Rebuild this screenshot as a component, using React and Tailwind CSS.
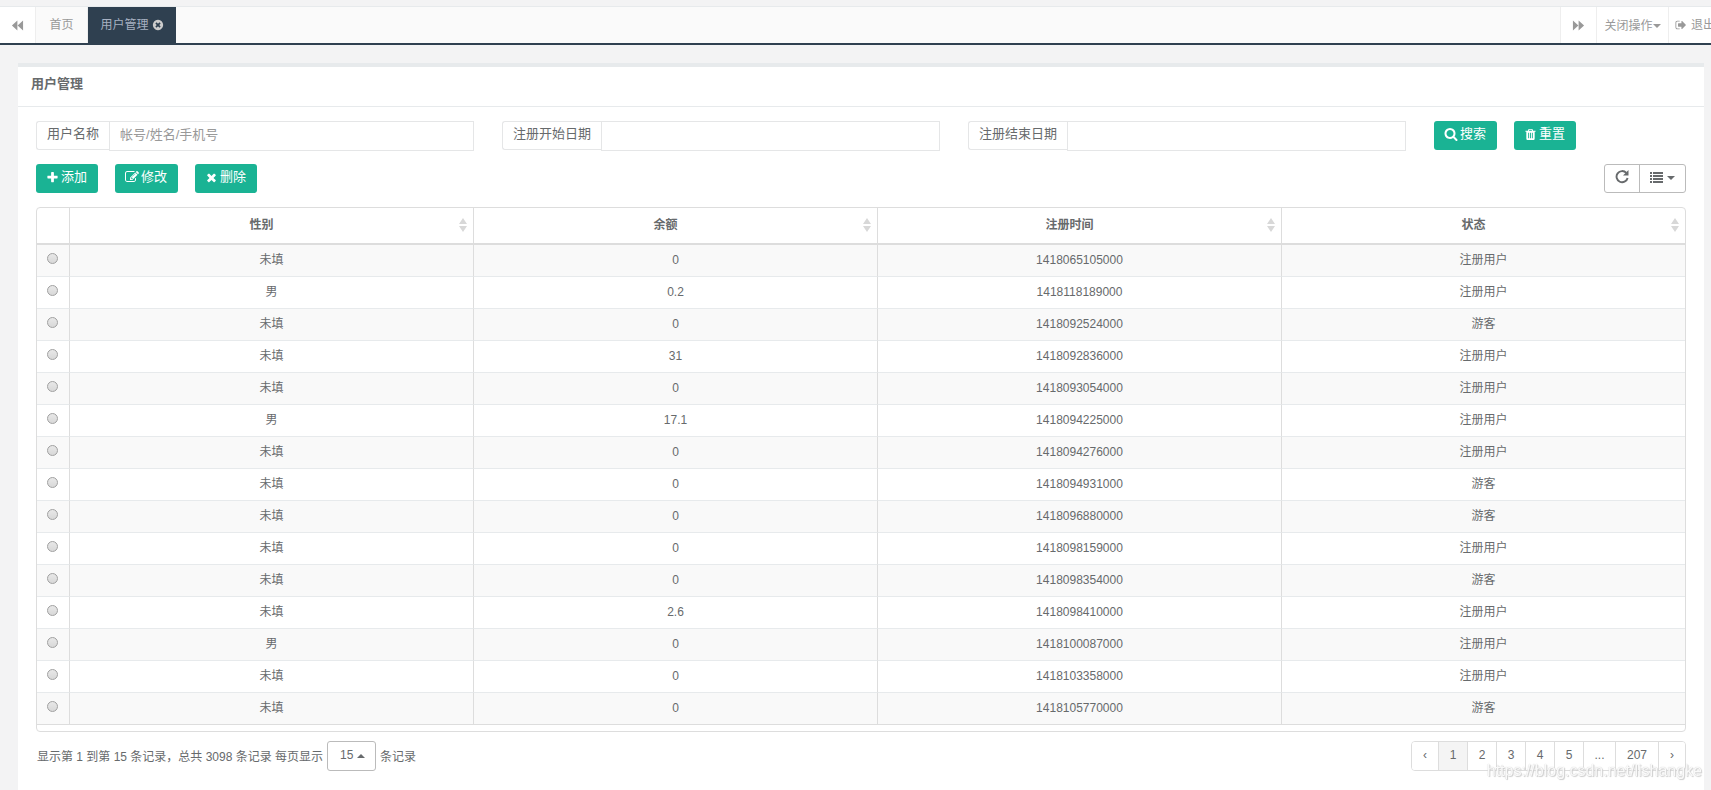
import React from 'react';

const ICONS = {
  backward: 'M880 192v1408L128 896zM1664 192v1408L912 896z',
  forward: 'M128 192v1408l752-704zM912 192v1408l752-704z',
  plus: 'M1600 736v192q0 40-28 68t-68 28h-416v416q0 40-28 68t-68 28h-192q-40 0-68-28t-28-68v-416h-416q-40 0-68-28t-28-68v-192q0-40 28-68t68-28h416v-416q0-40 28-68t68-28h192q40 0 68 28t28 68v416h416q40 0 68 28t28 68z',
  edit: 'M888 1184l116-116-152-152-116 116v56h96v96h56zm440-720q-16-16-33 1l-350 350q-17 17-1 33t33-1l350-350q17-17 1-33zm80 594v190q0 119-84.5 203.5t-203.5 84.5h-832q-119 0-203.5-84.5t-84.5-203.5v-832q0-119 84.5-203.5t203.5-84.5h832q63 0 117 25 15 7 18 23 3 17-9 29l-49 49q-14 14-32 8-23-6-45-6h-832q-66 0-113 47t-47 113v832q0 66 47 113t113 47h832q66 0 113-47t47-113v-126q0-13 9-22l64-64q15-15 35-7t20 29zm-96-738l288 288-672 672h-288v-288zm444 132l-92 92-288-288 92-92q28-28 68-28t68 28l152 152q28 28 28 68t-28 68z',
  remove: 'M1490 1322q0 40-28 68l-136 136q-28 28-68 28t-68-28l-294-294-294 294q-28 28-68 28t-68-28l-136-136q-28-28-28-68t28-68l294-294-294-294q-28-28-28-68t28-68l136-136q28-28 68-28t68 28l294 294 294-294q28-28 68-28t68 28l136 136q28 28 28 68t-28 68l-294 294 294 294q28 28 28 68z',
  search: 'M1216 832q0-185-131.5-316.5t-316.5-131.5-316.5 131.5-131.5 316.5 131.5 316.5 316.5 131.5 316.5-131.5 131.5-316.5zm512 832q0 52-38 90t-90 38q-54 0-90-38l-343-342q-179 124-399 124-143 0-273.5-55.5t-225-150-150-225-55.5-273.5 55.5-273.5 150-225 225-150 273.5-55.5 273.5 55.5 225 150 150 225 55.5 273.5q0 220-124 399l343 343q37 37 37 90z',
  trash: 'M704 1376v-704q0-14-9-23t-23-9h-64q-14 0-23 9t-9 23v704q0 14 9 23t23 9h64q14 0 23-9t9-23zm256 0v-704q0-14-9-23t-23-9h-64q-14 0-23 9t-9 23v704q0 14 9 23t23 9h64q14 0 23-9t9-23zm256 0v-704q0-14-9-23t-23-9h-64q-14 0-23 9t-9 23v704q0 14 9 23t23 9h64q14 0 23-9t9-23zm-544-992h448l-48-117q-7-9-17-11h-317q-10 2-17 11zm928 32v64q0 14-9 23t-23 9h-96v948q0 83-47 143.5t-113 60.5h-832q-66 0-113-58.5t-47-141.5v-952h-96q-14 0-23-9t-9-23v-64q0-14 9-23t23-9h309l70-167q15-37 54-63t79-26h320q40 0 79 26t54 63l70 167h309q14 0 23 9t9 23z',
  close: 'M1277 1122q0-26-19-45l-181-181 181-181q19-19 19-45 0-27-19-46l-90-90q-19-19-46-19-26 0-45 19l-181 181-181-181q-19-19-45-19-27 0-46 19l-90 90q-19 19-19 46 0 26 19 45l181 181-181 181q-19 19-19 45 0 27 19 46l90 90q19 19 46 19 26 0 45-19l181-181 181 181q19 19 45 19 27 0 46-19l90-90q19-19 19-46zm387-226q0 209-103 385.5t-279.5 279.5-385.5 103-385.5-103-279.5-279.5-103-385.5 103-385.5 279.5-279.5 385.5-103 385.5 103 279.5 279.5 103 385.5z',
  signOut: 'M704 1440q0 4 1 20t.5 26.5-3 23.5-10 19.5-20.5 6.5h-320q-119 0-203.5-84.5t-84.5-203.5v-704q0-119 84.5-203.5t203.5-84.5h320q13 0 22.5 9.5t9.5 22.5q0 4 1 20t.5 26.5-3 23.5-10 19.5-20.5 6.5h-320q-66 0-113 47t-47 113v704q0 66 47 113t113 47h312l11.5 1 11.5 3 8 5.5 7 9 2 13.5zm928-544q0 26-19 45l-544 544q-19 19-45 19t-45-19-19-45v-288h-448q-26 0-45-19t-19-45v-384q0-26 19-45t45-19h448v-288q0-26 19-45t45-19 45 19l544 544q19 19 19 45z',
};

const COLUMNS = ['性别', '余额', '注册时间', '状态'];

const USERS = [
  ['未填', '0', '1418065105000', '注册用户'],
  ['男', '0.2', '1418118189000', '注册用户'],
  ['未填', '0', '1418092524000', '游客'],
  ['未填', '31', '1418092836000', '注册用户'],
  ['未填', '0', '1418093054000', '注册用户'],
  ['男', '17.1', '1418094225000', '注册用户'],
  ['未填', '0', '1418094276000', '注册用户'],
  ['未填', '0', '1418094931000', '游客'],
  ['未填', '0', '1418096880000', '游客'],
  ['未填', '0', '1418098159000', '注册用户'],
  ['未填', '0', '1418098354000', '游客'],
  ['未填', '2.6', '1418098410000', '注册用户'],
  ['男', '0', '1418100087000', '注册用户'],
  ['未填', '0', '1418103358000', '注册用户'],
  ['未填', '0', '1418105770000', '游客'],
];

const PAGES = [
  { label: '‹', width: 'w-[27px]' },
  { label: '1', width: 'w-[29px]', active: true },
  { label: '2', width: 'w-[29px]' },
  { label: '3', width: 'w-[29px]' },
  { label: '4', width: 'w-[29px]' },
  { label: '5', width: 'w-[29px]' },
  { label: '...', width: 'w-8' },
  { label: '207', width: 'w-[43px]' },
  { label: '›', width: 'w-[26px]' },
];

function Icon({ name, className = 'size-[13px]' }) {
  return (
    <svg viewBox="0 0 1792 1792" fill="currentColor" className={`shrink-0 ${className}`} aria-hidden="true">
      <path d={ICONS[name]} />
    </svg>
  );
}

function Caret({ up }) {
  return (
    <svg viewBox="0 0 8 4" fill="currentColor" className="h-1 w-2 shrink-0" aria-hidden="true">
      <path d={up ? 'M0 4h8L4 0z' : 'M0 0h8L4 4z'} />
    </svg>
  );
}

function ActionButton({ icon, iconClass, children }) {
  return (
    <button
      type="button"
      className="flex h-[29px] items-center gap-0.5 rounded-[3px] bg-[#1ab394] pr-[11px] pb-[3px] pl-2.5 text-[13px] text-white"
    >
      <Icon name={icon} className={iconClass} />
      {children}
    </button>
  );
}

function Field({ id, label, placeholder }) {
  return (
    <div className="flex min-w-0 flex-1 items-start">
      <label
        htmlFor={id}
        className="flex h-[29px] shrink-0 items-center rounded-l-[3px] border border-r-0 border-[#e5e6e7] px-2.5 pb-1 text-[13px]"
      >
        {label}
      </label>
      <input
        id={id}
        type="text"
        placeholder={placeholder}
        className="h-[30px] min-w-0 flex-1 border border-[#e5e6e7] bg-white px-2.5 pb-[3px] text-[13px] outline-none placeholder:text-[#999]"
      />
    </div>
  );
}

function TabBar() {
  return (
    <header className="mt-1.5 flex h-[39px] shrink-0 overflow-hidden border-t border-b-2 border-t-[#e7eaec] border-b-[#2f4050] bg-[#fafafa] text-[12px] text-[#999]">
      <button type="button" aria-label="向左" className="flex w-9 shrink-0 items-center justify-center border-r border-[#eee] bg-white">
        <Icon name="backward" />
      </button>
      <nav className="flex min-w-0 flex-1">
        <a href="#home" className="flex w-[52px] items-center justify-center border-r border-[#eee]">首页</a>
        <a href="#users" className="flex w-[88px] items-center justify-center gap-[3px] bg-[#2f4050] text-[#a7b1c2]">
          用户管理
          <Icon name="close" className="size-3 text-[#ccc]" />
        </a>
      </nav>
      <button type="button" aria-label="向右" className="flex w-9 shrink-0 items-center justify-center border-l border-[#eee] bg-white">
        <Icon name="forward" />
      </button>
      <button type="button" className="flex w-[72px] shrink-0 items-center justify-center border-l border-[#eee] bg-white pt-0.5">
        关闭操作
        <Caret />
      </button>
      <a href="#logout" className="flex w-[43px] shrink-0 items-center gap-1 border-l border-[#eee] bg-white pl-1.5 whitespace-nowrap">
        <Icon name="signOut" className="size-3" />
        退出
      </a>
    </header>
  );
}

function UserTable() {
  return (
    <div className="mt-[14px] overflow-hidden rounded-[4px] border border-[#ddd] pb-1.5">
      <table className="w-full table-fixed border-separate border-spacing-0 text-center text-[12px]">
        <thead>
          <tr className="h-[37px]">
            <th className="w-8 border-b-2 border-[#ddd]" aria-label="选择" />
            {COLUMNS.map((column) => (
              <th key={column} className="border-b-2 border-l border-[#ddd] pb-0.5 font-bold">
                <div className="flex items-center pr-1.5">
                  <span className="flex-1 pr-1.5">{column}</span>
                  <svg viewBox="0 0 8 14" fill="#d8d8d8" className="h-[14px] w-2" aria-hidden="true">
                    <path d="M4 0l4 6H0zM0 8h8l-4 6z" />
                  </svg>
                </div>
              </th>
            ))}
          </tr>
        </thead>
        <tbody>
          {USERS.map((user) => (
            <tr key={user[2]} className="group h-8 odd:bg-[#f9f9f9]">
              <td className="border-b border-[#e7eaec] pr-0.5 pb-1 group-last:border-[#ddd]">
                <input
                  type="radio"
                  name="user"
                  aria-label={user[2]}
                  className="mx-auto block size-[11px] appearance-none rounded-full border border-[#a0a0a0] bg-linear-to-b from-[#e8e8e8] to-[#d8d8d8]"
                />
              </td>
              {user.map((value, i) => (
                <td
                  key={COLUMNS[i]}
                  className="border-b border-l border-b-[#e7eaec] border-l-[#ddd] pb-0.5 group-last:border-b-[#ddd]"
                >
                  {value}
                </td>
              ))}
            </tr>
          ))}
        </tbody>
      </table>
    </div>
  );
}

function Pagination() {
  return (
    <div className="mt-[9px] flex items-center justify-between text-[12px]">
      <div className="flex items-center gap-1 pl-px whitespace-nowrap">
        <label htmlFor="page-size" className="pt-0.5">显示第 1 到第 15 条记录，总共 3098 条记录 每页显示</label>
        <span className="relative flex items-center">
          <select
            id="page-size"
            defaultValue="15"
            className="h-[30px] w-[49px] appearance-none rounded-[3px] border border-[#bbb] bg-white pl-3 pb-0.5"
          >
            <option>15</option>
          </select>
          <span className="pointer-events-none absolute right-[11px]">
            <Caret up />
          </span>
        </span>
        <span className="pt-0.5">条记录</span>
      </div>
      <nav className="flex h-[30px] divide-x divide-[#ddd] overflow-hidden rounded-[4px] border border-[#ddd]">
        {PAGES.map(({ label, width, active }) => (
          <a
            key={label}
            href="#page"
            className={`flex items-center justify-center pb-0.5 ${width} ${active ? 'bg-[#f4f4f4]' : 'bg-white'}`}
          >
            {label}
          </a>
        ))}
      </nav>
    </div>
  );
}

export default function App() {
  return (
    <div className="flex min-h-screen flex-col bg-[#f3f3f4] font-['Liberation_Sans','Noto_Sans_CJK_SC',sans-serif] text-[#676a6c]">
      <TabBar />
      <main className="mt-[18px] mr-[7px] ml-[18px] flex-1 border-t-4 border-[#e7eaec] bg-white">
        <h1 className="flex h-10 items-center border-b border-[#e7eaec] px-[13px] pb-1.5 text-[13px] font-semibold">用户管理</h1>
        <div className="px-[18px] pt-[14px] pb-4">
          <form className="flex gap-7">
            <Field id="keyword" label="用户名称" placeholder="帐号/姓名/手机号" />
            <Field id="start-date" label="注册开始日期" />
            <Field id="end-date" label="注册结束日期" />
            <div className="flex w-[252px] shrink-0 gap-[17px]">
              <ActionButton icon="search" iconClass="size-[14px]">搜索</ActionButton>
              <ActionButton icon="trash">重置</ActionButton>
            </div>
          </form>
          <div className="mt-[13px] flex items-center gap-[17px]">
            <ActionButton icon="plus">添加</ActionButton>
            <ActionButton icon="edit" iconClass="size-[14px]">修改</ActionButton>
            <ActionButton icon="remove">删除</ActionButton>
            <div className="ml-auto flex h-[29px] divide-x divide-[#bbb] rounded-[3px] border border-[#bbb]">
              <button type="button" aria-label="刷新" className="flex w-[35px] items-center justify-center pb-[3px]">
                <svg viewBox="0 0 14 14" className="size-[14px]" aria-hidden="true">
                  <path d="M11.3 2.9A5.6 5.6 0 1 0 12.6 8" fill="none" stroke="currentColor" strokeWidth="1.9" />
                  <path d="M13.5 0v5.5H8z" fill="currentColor" />
                </svg>
              </button>
              <button type="button" aria-label="列" className="flex w-[45px] items-center justify-center gap-1 pb-0.5">
                <svg viewBox="0 0 13 12" fill="currentColor" className="h-3 w-[13px]" shapeRendering="crispEdges" aria-hidden="true">
                  <path d="M0 0h2v2H0zM3 0h10v2H3zM0 3h2v2H0zM3 3h10v2H3zM0 6h2v2H0zM3 6h10v2H3zM0 9h2v2H0zM3 9h10v2H3z" />
                </svg>
                <Caret />
              </button>
            </div>
          </div>
          <UserTable />
          <Pagination />
        </div>
      </main>
      <p className="pointer-events-none fixed right-[9px] bottom-[7px] text-[16px] text-white/90 [text-shadow:1px_1px_1px_#ccc,0_0_1px_#bbb]">
        https://blog.csdn.net/lishangke
      </p>
    </div>
  );
}
